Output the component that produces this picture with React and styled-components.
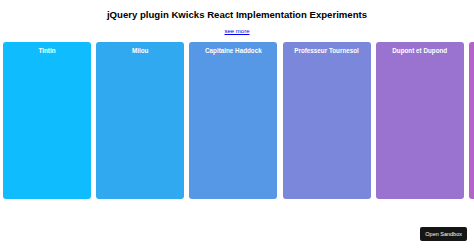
import React from "react";
import styled, { createGlobalStyle } from "styled-components";

const GlobalStyle = createGlobalStyle`
  html, body {
    margin: 0;
    padding: 0;
    background: #fff;
    font-family: "Liberation Sans", Arial, sans-serif;
    overflow: hidden;
  }
`;

const Page = styled.div`
  width: 474px;
  height: 248px;
  position: relative;
  overflow: hidden;
`;

const Title = styled.h1`
  margin: 0;
  padding-top: 9px;
  font-size: 9.6px;
  line-height: 11px;
  font-weight: bold;
  text-align: center;
  color: #000;
`;

const More = styled.a`
  display: block;
  margin-top: 7px;
  text-align: center;
  font-size: 6px;
  line-height: 8px;
  color: #0000ee;
  text-decoration: underline;
`;

const Strip = styled.ul`
  list-style: none;
  margin: 7px 0 0;
  padding: 0 0 0 3px;
  display: flex;
  gap: 5.2px;
`;

const Panel = styled.li`
  flex: 0 0 88px;
  height: 157px;
  border-radius: 3px;
  background: ${(p) => p.$bg};
  color: #fff;
  font-size: 6.3px;
  font-weight: bold;
  text-align: center;
  padding-top: 5px;
  box-sizing: border-box;
`;

const SandboxButton = styled.a`
  position: absolute;
  right: 7px;
  bottom: 7px;
  background: #151515;
  color: #fff;
  font-size: 5.5px;
  line-height: 14px;
  padding: 0 5px;
  border-radius: 2px;
  text-decoration: none;
`;

const panels = [
  { name: "Tintin", color: "#0fbcfd" },
  { name: "Milou", color: "#30a9f1" },
  { name: "Capitaine Haddock", color: "#5698e6" },
  { name: "Professeur Tournesol", color: "#7a87da" },
  { name: "Dupont et Dupond", color: "#9a73d1" },
  { name: "", color: "#b563cb" },
];

export default function App() {
  return (
    <Page>
      <GlobalStyle />
      <Title>jQuery plugin Kwicks React Implementation Experiments</Title>
      <More href="#">see more</More>
      <Strip>
        {panels.map((p, i) => (
          <Panel key={i} $bg={p.color}>
            {p.name}
          </Panel>
        ))}
      </Strip>
      <SandboxButton href="#">Open Sandbox</SandboxButton>
    </Page>
  );
}
